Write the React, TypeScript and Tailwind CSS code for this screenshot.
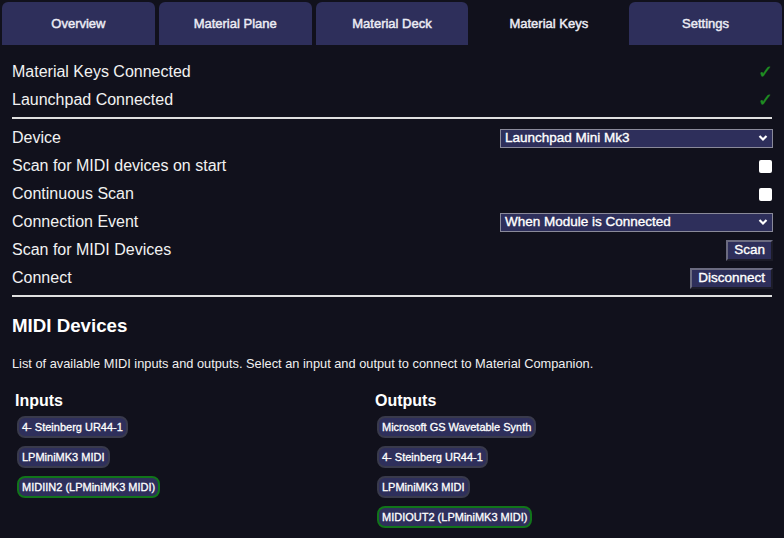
import React from "react";

const tabs = ["Overview", "Material Plane", "Material Deck", "Material Keys", "Settings"];

function Check() {
  return <span className="text-[18px] leading-none text-[#1f8f22] [-webkit-text-stroke:0.4px_#1f8f22]">✓</span>;
}

function Select({ value }: { value: string }) {
  return (
    <div className="w-[273px] h-[19px] bg-[#2e2f5b] border border-[#8a8a9a] flex items-center justify-between pl-[4px] pr-[4px]">
      <span className="text-[13.5px] text-white leading-none [-webkit-text-stroke:0.35px_white]">{value}</span>
      <svg width="10" height="8" viewBox="0 0 10 8">
        <path d="M1.5 2 L5 5.5 L8.5 2" stroke="white" strokeWidth="2.2" fill="none" />
      </svg>
    </div>
  );
}

function Box() {
  return <div className="w-[13px] h-[13px] bg-white rounded-[2px] mr-[1px]" />;
}

function Btn({ label }: { label: string }) {
  return (
    <div className="bg-[#2e2f5b] text-white text-[13.5px] leading-none px-[6px] h-[21px] flex items-center border-2 border-t-[#6b6b80] border-l-[#6b6b80] border-b-[#1c1c28] border-r-[#1c1c28] [-webkit-text-stroke:0.35px_white]">
      {label}
    </div>
  );
}

function Row({ label, right }: { label: string; right?: React.ReactNode }) {
  return (
    <div className="h-[28px] flex items-center justify-between">
      <span className="text-[16px] text-[#f2f2f2]">{label}</span>
      {right}
    </div>
  );
}

function Chip({ label, active }: { label: string; active?: boolean }) {
  return (
    <div
      className={
        "self-start h-[22px] flex items-center px-[3px] rounded-[8px] bg-[#2e2f5b] border-2 text-[11px] text-white [-webkit-text-stroke:0.3px_white] " +
        (active ? "border-[#11751a]" : "border-[#393a4c]")
      }
    >
      {label}
    </div>
  );
}

export default function App() {
  return (
    <div className="w-[784px] h-[538px] bg-[#11111c] overflow-hidden" style={{ fontFamily: '"Liberation Sans", Arial, sans-serif' }}>
      <div className="flex gap-[4px] px-[2px] pt-[2px]">
        {tabs.map((t) => (
          <div
            key={t}
            className={
              "flex-1 h-[43px] pt-[1px] rounded-t-[6px] flex items-center justify-center text-[13px] text-[#ececf4] [-webkit-text-stroke:0.45px_#ececf4] " +
              (t === "Material Keys" ? "" : "bg-[#2e2f5b]")
            }
          >
            {t}
          </div>
        ))}
      </div>
      <div className="pl-[12px] pr-[11px] pt-[13px]">
        <Row label="Material Keys Connected" right={<Check />} />
        <Row label="Launchpad Connected" right={<Check />} />
        <div className="h-[2px] bg-[#e0e0e0] mt-[3px] mb-[5px] mr-[1px]" />
        <Row label="Device" right={<Select value="Launchpad Mini Mk3" />} />
        <Row label="Scan for MIDI devices on start" right={<Box />} />
        <Row label="Continuous Scan" right={<Box />} />
        <Row label="Connection Event" right={<Select value="When Module is Connected" />} />
        <Row label="Scan for MIDI Devices" right={<Btn label="Scan" />} />
        <Row label="Connect" right={<Btn label="Disconnect" />} />
        <div className="h-[2px] bg-[#e0e0e0] mt-[3px] mb-[4px] mr-[1px]" />
        <h2 className="text-[18.72px] font-bold text-white leading-[22px] mt-[18px]">MIDI Devices</h2>
        <p className="text-[12.8px] text-[#f0f0f0] leading-[15px] mt-[19px]">
          List of available MIDI inputs and outputs. Select an input and output to connect to Material Companion.
        </p>
        <div className="flex mt-[21px] pl-[3px]">
          <div className="w-[360px] flex flex-col">
            <h3 className="text-[16px] font-bold text-white leading-[18px] mb-[6px]">Inputs</h3>
            <div className="flex flex-col gap-[8px] pl-[2px]">
              <Chip label="4- Steinberg UR44-1" />
              <Chip label="LPMiniMK3 MIDI" />
              <Chip label="MIDIIN2 (LPMiniMK3 MIDI)" active />
            </div>
          </div>
          <div className="flex-1 flex flex-col">
            <h3 className="text-[16px] font-bold text-white leading-[18px] mb-[6px]">Outputs</h3>
            <div className="flex flex-col gap-[8px] pl-[2px]">
              <Chip label="Microsoft GS Wavetable Synth" />
              <Chip label="4- Steinberg UR44-1" />
              <Chip label="LPMiniMK3 MIDI" />
              <Chip label="MIDIOUT2 (LPMiniMK3 MIDI)" active />
            </div>
          </div>
        </div>
      </div>
    </div>
  );
}
